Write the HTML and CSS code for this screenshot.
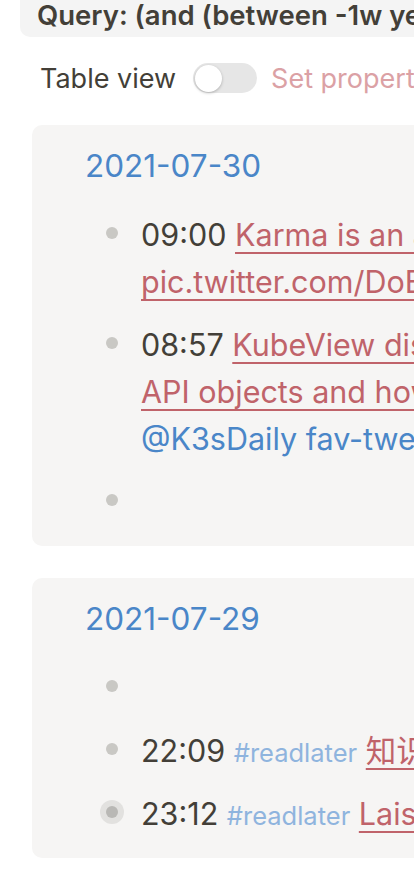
FILE: index.html
```html
<!DOCTYPE html>
<html lang="en">
<head>
<meta charset="utf-8">
<title>Query results</title>
<link rel="stylesheet" href="styles.css">
</head>
<body>
<div class="page">
  <div class="query-bar">Query: (and (between -1w yesterday) (not (task DONE)))</div>

  <div class="controls">
    <span class="label">Table view</span>
    <span class="toggle"><span class="knob"></span></span>
    <span class="set-props">Set properties</span>
  </div>

  <div class="card">
    <div class="date">2021-07-30</div>
    <div class="blocks">
      <div class="block">
        <span class="bullet-wrap"><span class="bullet"></span></span>
        <div class="content">
          <span class="line"><span class="time">09:00</span> <a class="link">Karma is an awesome test runner for Kubernetes</a></span>
          <span class="line"><a class="link">pic.twitter.com/DoBxW9kLq2</a></span>
        </div>
      </div>
      <div class="block">
        <span class="bullet-wrap"><span class="bullet"></span></span>
        <div class="content">
          <span class="line"><span class="time">08:57</span> <a class="link">KubeView displays a graphical view of your</a></span>
          <span class="line"><a class="link">API objects and how they are interconnected</a></span>
          <span class="line"><span class="tag">@K3sDaily fav-tweet</span></span>
        </div>
      </div>
      <div class="block">
        <span class="bullet-wrap"><span class="bullet"></span></span>
        <div class="content"><span class="line"></span></div>
      </div>
    </div>
  </div>

  <div class="card">
    <div class="date">2021-07-29</div>
    <div class="blocks">
      <div class="block">
        <span class="bullet-wrap"><span class="bullet"></span></span>
        <div class="content"><span class="line"></span></div>
      </div>
      <div class="block">
        <span class="bullet-wrap"><span class="bullet"></span></span>
        <div class="content">
          <span class="line"><span class="time">22:09</span> <span class="hashtag">#readlater</span> <a class="link">知识管理的方法论</a></span>
        </div>
      </div>
      <div class="block">
        <span class="bullet-wrap"><span class="bullet collapsed"></span></span>
        <div class="content">
          <span class="line"><span class="time">23:12</span> <span class="hashtag">#readlater</span> <a class="link">Laissez-faire note taking</a></span>
        </div>
      </div>
    </div>
  </div>
</div>
</body>
</html>
```

FILE: styles.css
```css
* {
  box-sizing: border-box;
}

html, body {
  margin: 0;
  padding: 0;
  background: #ffffff;
  overflow: hidden;
}

body {
  width: 414px;
  height: 876px;
  font-family: Inter, "Noto Sans CJK SC", sans-serif;
  color: #433f38;
}

.page {
  width: 900px;
}

.query-bar {
  margin-left: 20px;
  background: #f4f4f4;
  border-bottom-left-radius: 10px;
  padding: 0 0 6px 17px;
  font-size: 27.5px;
  line-height: 31px;
  font-weight: 600;
  color: #433f38;
  white-space: nowrap;
}

.controls {
  display: flex;
  align-items: center;
  height: 36px;
  margin: 23px 0 0 40px;
  white-space: nowrap;
}

.label {
  font-size: 27px;
  color: #433f38;
}

.toggle {
  display: flex;
  align-items: center;
  width: 64px;
  height: 30px;
  margin-left: 17px;
  padding: 0 2px;
  border-radius: 15px;
  background: #e6e6e6;
}

.knob {
  width: 27px;
  height: 27px;
  border-radius: 50%;
  background: #ffffff;
  box-shadow: 0 1px 3px rgba(0, 0, 0, 0.25);
}

.set-props {
  margin-left: 14px;
  font-size: 27px;
  color: #dba1a5;
}

.card {
  margin: 29px 0 0 32px;
  background: #f6f5f4;
  border-radius: 10px;
  padding: 21px 0 13px 53px;
}

.card + .card {
  margin-top: 32px;
}

.date {
  font-size: 31.5px;
  line-height: 40px;
  color: #4a86c8;
  margin-bottom: 17px;
}

.blocks {
  margin-left: 15px;
}

.block {
  display: flex;
  padding: 8px 0;
}

.bullet-wrap {
  flex: 0 0 24px;
  height: 43px;
  display: flex;
  align-items: center;
  justify-content: center;
}

.bullet {
  width: 12px;
  height: 12px;
  border-radius: 50%;
  background: #c9c8c4;
}

.bullet.collapsed {
  background: #b9b8b5;
  box-shadow: 0 0 0 6px #e2e1df;
}

.content {
  margin-left: 17px;
  display: flex;
  flex-direction: column;
  font-size: 30.5px;
  line-height: 47px;
}

.line {
  display: block;
  height: 47px;
  white-space: nowrap;
}

.time {
  color: #433f38;
}

.link {
  color: #c0636a;
  text-decoration: underline;
  text-decoration-thickness: 2px;
  text-underline-offset: 6px;
}

.tag {
  color: #4a86c8;
}

.hashtag {
  font-size: 25.5px;
  color: #8fb4de;
}
```
